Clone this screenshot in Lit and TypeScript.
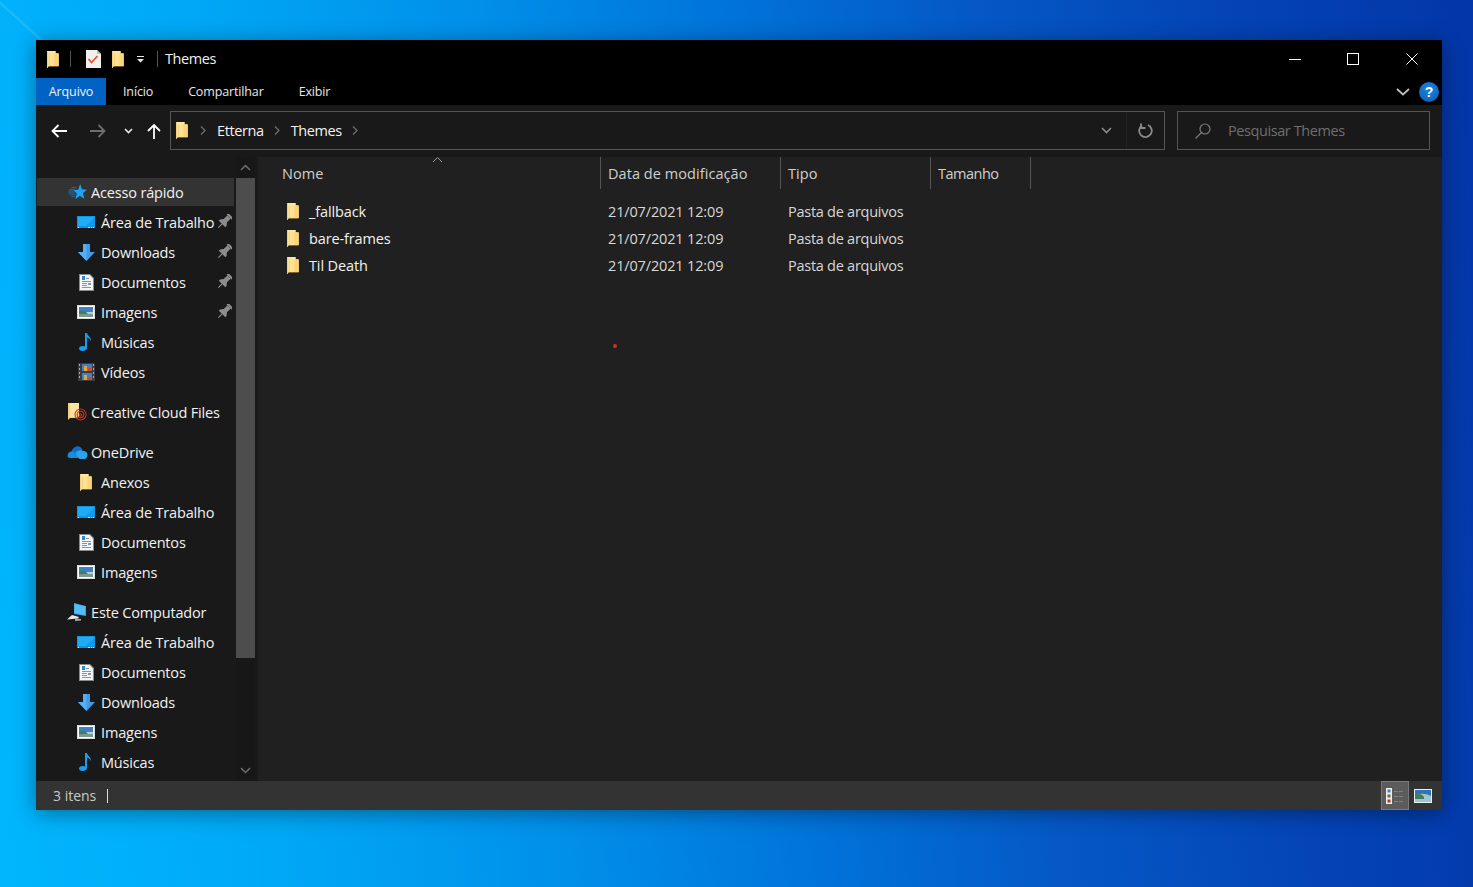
import { LitElement, html, css } from "lit";
import { customElement } from "lit/decorators.js";

const folder = (w = 12, h = 17) => html`<svg width=${w} height=${h} viewBox="0 0 13 17" preserveAspectRatio="none">
  <path d="M0 0h9.500v2.500h3V15H2.500L0 17z" fill="#fbe6a6"/>
  <path d="M2.500 2.500h10V15h-10z" fill="#ffe18f"/>
  <path d="M8 2.500h4.500V15H8z" fill="#fdd476"/>
  <path d="M0 0h1v16.500L0 17z" fill="#f2cf7e"/>
  <path d="M1.500 15.500h11V15h-10z" fill="#dda94a"/>
  <path d="M2.500 2.500V15H2V2z" fill="#e6bd62"/>
</svg>`;

const desktop = () => html`<svg width="18" height="14" viewBox="0 0 18 14">
  <rect x="0" y="1" width="18" height="12" fill="#0d96e6"/>
  <path d="M1 2h16v9H1z" fill="#22aaf5"/>
  <path d="M9 11L17 3v8z" fill="#0e9cf0"/>
  <path d="M1 12h1v1H1zM11 12h2v1h-2zM14 12h1v1h-1zM16 12h1v1h-1z" fill="#bfe6ff"/>
</svg>`;

const download = () => html`<svg width="17" height="17" viewBox="0 0 17 17">
  <path d="M5 0h7v8h5l-8.500 9L0 8h5z" fill="#3e9be6"/>
  <path d="M5 0h3.500v17L0 8h5z" fill="#57aef0"/>
</svg>`;

const doc = () => html`<svg width="15" height="17" viewBox="0 0 15 17">
  <path d="M0 0h11l4 4v13H0z" fill="#8a8a8a"/>
  <path d="M1 1h9.500L14 4.500V16H1z" fill="#f4f4f4"/>
  <path d="M3 2h3v4H3z" fill="#2f8ad8"/>
  <path d="M7 4h3v1H7zM3 7h9v1H3zM3 9h5v1H3zM9 9h3v2H9zM3 11h5v1H3zM3 13h9v1H3z" fill="#7f97ad"/>
</svg>`;

const picture = () => html`<svg width="18" height="14" viewBox="0 0 18 14">
  <rect width="18" height="14" fill="#d8d8d8"/>
  <rect x="1" y="1" width="16" height="12" fill="#fff"/>
  <rect x="2" y="2" width="14" height="5" fill="#3f82c4"/>
  <path d="M2 7h14v2H2z" fill="#a9cfe0"/>
  <path d="M2 6c4-1 7 0 9 3H2z" fill="#3f7f5d"/>
  <path d="M2 9h14v3H2z" fill="#7a9a90"/>
</svg>`;

const music = () => html`<svg width="14" height="18" viewBox="0 0 14 18">
  <path d="M6 0h2c.3 3 4.500 4 4 8-1-2.500-2.500-3-4-3.500V15c0 2-2 3-4.500 3C1.500 18 0 17 0 15.500 0 13.800 2 13 3.800 13c.9 0 1.700.2 2.200.5z" fill="#1a9df0"/>
</svg>`;

const video = () => html`<svg width="17" height="18" viewBox="0 0 17 18">
  <rect width="17" height="18" fill="#3c3c3c"/>
  <path d="M1 1h1v2H1zM1 5h1v2H1zM1 9h1v2H1zM1 13h1v2H1zM15 1h1v2h-1zM15 5h1v2h-1zM15 9h1v2h-1zM15 13h1v2h-1z" fill="#aaa"/>
  <rect x="4" y="1" width="10" height="7" fill="#3f7fd0"/>
  <rect x="4" y="10" width="10" height="7" fill="#3f7fd0"/>
  <path d="M6 3h3v5H6zM6 12h3v5H6z" fill="#e2a72c"/>
  <path d="M10 5h3v3h-3zM10 14h3v3h-3z" fill="#c8472f"/>
</svg>`;

const pin = () => html`<svg width="15" height="15" viewBox="0 0 13 13">
  <g transform="rotate(45 6.500 6.500)" fill="#8c8c8c">
    <rect x="3.500" y="-1" width="6" height="2"/>
    <path d="M4.500 1h4v4.500L10.500 8v1.500h-8V8l2-2.500z"/>
    <rect x="6" y="9.500" width="1" height="4.500"/>
  </g>
</svg>`;

const star = () => html`<svg width="19" height="17" viewBox="0 0 18 16">
  <path d="M11.500 0l1.700 5 4.800.3-3.800 3.200 1.300 5.500-4.500-3L7 14.500l1.300-5.600L5 5.700l4.700-.4z" fill="#1ca3f5"/>
  <path d="M1 5.500h5M0 7.500h6M1 9.500h6M3 11.500h4M3 3.500h5" stroke="#1c9cf0" stroke-width="1" opacity=".6"/>
</svg>`;

const cloudFiles = () => html`<svg width="19" height="18" viewBox="0 0 19 18">
  <path d="M0 0h9.500v15H2l-2 2z" fill="#f6d27f"/>
  <path d="M2 0h9v14H2z" fill="#ffe39f"/>
  <g fill="none" stroke="#e0281c" stroke-width="1.100">
    <circle cx="12.500" cy="11.500" r="5.500"/><circle cx="12.500" cy="11.500" r="3.300"/><circle cx="12.500" cy="12" r="1.200"/>
  </g>
</svg>`;

const onedrive = () => html`<svg width="21" height="13" viewBox="0 0 20 13">
  <path d="M4 5.500C5 2 8-.5 11 .3c2 .5 3.500 2 4 4l-7 5z" fill="#0f6cc4"/>
  <path d="M0 10c0-3 2-4.500 4-4.500 1 0 2 .2 3 1l6 5.500H3c-2 0-3-.8-3-2z" fill="#1a8be0"/>
  <path d="M8 7c1.500-2 4-3 6-2.500 1 .1 1.500.3 2 .6 2 .1 4 1.500 4 3.900 0 2-1.500 4-3 4H12z" fill="#2ba4ee"/>
</svg>`;

const computer = () => html`<svg width="20" height="18" viewBox="0 0 20 18">
  <path d="M7 0l12 3v10L7 11z" fill="#3ba4e8"/>
  <path d="M7.500 1L18 3.500V12L7.500 10z" fill="#54bdf5"/>
  <path d="M5 12l7 2-1 1.500L0 16.500z" fill="#e8e8e8"/>
  <path d="M8 15.500l6 .5v1.500l-6 .5z" fill="#aaa"/>
</svg>`;

type Row = { icon: unknown; label: string; level: number; pinned?: boolean; active?: boolean; gap?: boolean };

const rows: Row[] = [
  { icon: star(), label: "Acesso rápido", level: 0, active: true },
  { icon: desktop(), label: "Área de Trabalho", level: 1, pinned: true },
  { icon: download(), label: "Downloads", level: 1, pinned: true },
  { icon: doc(), label: "Documentos", level: 1, pinned: true },
  { icon: picture(), label: "Imagens", level: 1, pinned: true },
  { icon: music(), label: "Músicas", level: 1 },
  { icon: video(), label: "Vídeos", level: 1 },
  { icon: cloudFiles(), label: "Creative Cloud Files", level: 0, gap: true },
  { icon: onedrive(), label: "OneDrive", level: 0, gap: true },
  { icon: folder(), label: "Anexos", level: 1 },
  { icon: desktop(), label: "Área de Trabalho", level: 1 },
  { icon: doc(), label: "Documentos", level: 1 },
  { icon: picture(), label: "Imagens", level: 1 },
  { icon: computer(), label: "Este Computador", level: 0, gap: true },
  { icon: desktop(), label: "Área de Trabalho", level: 1 },
  { icon: doc(), label: "Documentos", level: 1 },
  { icon: download(), label: "Downloads", level: 1 },
  { icon: picture(), label: "Imagens", level: 1 },
  { icon: music(), label: "Músicas", level: 1 },
];

const files = ["_fallback", "bare-frames", "Til Death"];

@customElement("app-root")
export class AppRoot extends LitElement {
  static styles = css`
    :host {
      display: block;
      width: 1473px;
      height: 887px;
      overflow: hidden;
      box-sizing: border-box;
      padding: 40px 31px 0 36px;
      font-family: "Open Sans", "Noto Sans", sans-serif;
      font-size: 14px;
      color: #f2f2f2;
      background:
        linear-gradient(42deg, transparent 49%, rgba(255,255,255,.14) 50%, transparent 53%) 0 0 / 70px 70px no-repeat,
        linear-gradient(84deg, #00b6fd 0%, #00a8f6 18%, #0090ea 36%, #0074da 52%, #0558c6 68%, #0444b6 84%, #0336a8 100%);
    }
    .window {
      width: 1406px;
      height: 770px;
      display: flex;
      flex-direction: column;
      background: #000;
      box-shadow: 0 3px 20px rgba(0,0,0,.4);
    }
    .title {
      height: 38px;
      display: flex;
      align-items: center;
      padding-left: 11px;
      flex: none;
    }
    .sep { width: 1px; height: 16px; background: #555; }
    .sep.a { margin: 0 15px 0 11px; }
    .sep.b { margin: 0 7px 0 13px; }
    .qa { display: flex; align-items: center; }
    .qa svg { display: block; }
    .qa .f2 { margin-left: 11px; }
    .qa .dd { margin-left: 13px; }
    .ttl { font-size: 14.5px; letter-spacing: -.4px; color: #f0f0f0; flex: 1; padding-bottom: 2px; }
    .win { display: flex; align-items: center; height: 38px; padding-right: 1px; }
    .win div { width: 58.5px; display: flex; justify-content: center; }
    .win svg { display: block; }

    .tabs { height: 27px; display: flex; align-items: stretch; flex: none; font-size: 12.5px; letter-spacing: -.14px; }
    .tab { display: flex; align-items: center; color: #e8e8e8; }
    .tab.arq { width: 70px; background: #0063c4; justify-content: center; color: #f0f0f0; }
    .tab.t1 { margin-left: 17px; }
    .tab.t2 { margin-left: 35px; }
    .tab.t3 { margin-left: 35px; }
    .tabend { margin-left: auto; display: flex; align-items: center; gap: 9px; padding-right: 3px; }
    .help {
      width: 20px; height: 20px; border-radius: 50%;
      background: radial-gradient(circle at 50% 35%, #1f83e0, #0b5cb0);
      color: #fff; font: bold 14px "Liberation Sans", sans-serif;
      display: flex; align-items: center; justify-content: center;
    }

    .nav {
      height: 52px; flex: none; background: #191919; box-sizing: border-box;
      display: flex; align-items: center; padding: 0 0 1px 15px;
    }
    .nav svg { display: block; flex: none; }
    .nav .fw { margin-left: 23px; }
    .nav .rec { margin-left: 18px; }
    .nav .up { margin-left: 14px; }
    .addr {
      margin-left: 9px;
      width: 995px; height: 39px; box-sizing: border-box;
      border: 1px solid #555;
      display: flex; align-items: center; padding-left: 5px;
      color: #f2f2f2;
    }
    .crumb { font-size: 14.5px; letter-spacing: -.4px; }
    .addr .chev { margin: 0 11px 0 10px; }
    .addr .chev.first { margin: 0 11px 0 12px; }
    .addr-end { margin-left: auto; display: flex; align-items: center; height: 100%; }
    .addr-end .dd { width: 39px; display: flex; justify-content: center; }
    .addr-end .rf { width: 38px; display: flex; justify-content: center; border-left: 1px solid #222; height: 100%; align-items: center; box-sizing: border-box; }
    .search {
      margin-left: 12px;
      width: 253px; height: 39px; box-sizing: border-box;
      border: 1px solid #555;
      display: flex; align-items: center;
      padding-left: 17px;
      color: #6f6f6f;
      gap: 17px;
      font-size: 14.5px;
      letter-spacing: -.42px;
    }

    .body { flex: 1; display: flex; min-height: 0; }
    .side {
      width: 222px; flex: none; display: flex; background: #191919;
      overflow: hidden;
    }
    .tree { width: 200px; flex: none; padding-top: 20px; box-sizing: border-box; }
    .row {
      height: 30px; display: flex; align-items: center; position: relative;
      white-space: nowrap;
    }
    .row.gap { margin-top: 10px; }
    .row.active::before {
      content: ""; position: absolute; left: 1px; right: 2px; top: 1px; bottom: 1px; background: #333;
    }
    .row > * { position: relative; }
    .ic { width: 24px; height: 20px; display: flex; align-items: center; justify-content: center; flex: none; }
    .ic svg { display: block; }
    .row.l0 .ic { margin-left: 29px; margin-right: 2px; }
    .row.l1 .ic { margin-left: 38px; margin-right: 3px; }
    .lbl { font-size: 14.5px; letter-spacing: -.17px; }
    .row > .pin { position: absolute; left: 181px; top: 7px; }
    .pin svg { display: block; }
    .sb { width: 19px; flex: none; background: #171717; display: flex; flex-direction: column; align-items: center; }
    .sb .btn { height: 21px; display: flex; align-items: center; justify-content: center; flex: none; }
    .thumb { height: 480px; width: 19px; background: #4d4d4d; flex: none; }
    .sb .grow { flex: 1; }
    .main { flex: 1; background: #202020; min-width: 0; position: relative; }
    .hd { display: flex; height: 32px; color: #d0d0d0; font-size: 14.5px; letter-spacing: .06px; }
    .hd > div { border-right: 1px solid #555; box-sizing: border-box; padding-left: 7px; display: flex; align-items: center; }
    .c0 { width: 343px; }
    .c1 { width: 180px; }
    .c2 { width: 150px; }
    .c3 { width: 100px; }
    .hd .c0 { padding-left: 24px; }
    .hd .c3 { letter-spacing: -.5px; }
    .sort { position: absolute; left: 174px; top: 0; }
    .files { padding-top: 9px; }
    .item { display: flex; height: 27px; align-items: center; font-size: 14.5px; }
    .item > div { box-sizing: border-box; white-space: nowrap; }
    .item .c0 { display: flex; align-items: center; padding-left: 29px; gap: 10px; color: #f2f2f2; letter-spacing: -.13px; }
    .item .c0 svg { display: block; }
    .item .c1, .item .c2 { padding-left: 7px; color: #d8d8d8; }
    .item .c1 { letter-spacing: -.15px; }
    .item .c2 { letter-spacing: -.26px; }
    .dot { position: absolute; left: 355px; top: 187px; width: 4px; height: 4px; border-radius: 50%; background: #d92b20; }
    .status {
      height: 29px; flex: none; background: #333; display: flex; align-items: center;
      padding-left: 17px; color: #c8c8c8;
    }
    .bar { width: 1px; height: 14px; background: #ddd; margin-left: 11px; }
    .views { margin-left: auto; display: flex; align-items: center; padding-right: 5px; }
    .vw { width: 28px; height: 29px; box-sizing: border-box; background: #5c5c5c; border: 1px solid #7a7a7a; display: flex; align-items: center; justify-content: center; }
    .vw2 { width: 28px; display: flex; justify-content: center; }
    .views svg { display: block; }
  `;

  render() {
    const chev = (first = false) => html`<svg class="chev ${first ? "first" : ""}" width="6" height="9" viewBox="0 0 6 9"><path d="M1 .5l4 4-4 4" fill="none" stroke="#6e6e6e" stroke-width="1.300"/></svg>`;
    return html`
      <div class="window">
        <div class="title">
          <div class="qa">${folder()}</div>
          <div class="sep a"></div>
          <div class="qa">
            <svg width="15" height="18" viewBox="0 0 15 18">
              <path d="M0 0h11l4 4v14H0z" fill="#f0f0f0"/>
              <path d="M11 0l4 4h-4z" fill="#bbb"/>
              <path d="M2.500 9l3 3.500L11.500 6" fill="none" stroke="#e8562a" stroke-width="1.800"/>
            </svg>
            <span class="f2">${folder()}</span>
            <svg class="dd" width="7" height="7" viewBox="0 0 7 7"><path d="M0 0h7v1H0zM0 3h7L3.500 6.500z" fill="#e8e8e8"/></svg>
          </div>
          <div class="sep b"></div>
          <div class="ttl">Themes</div>
          <div class="win">
            <div><svg width="12" height="1"><rect width="12" height="1" fill="#fff"/></svg></div>
            <div><svg width="12" height="12"><rect x=".5" y=".5" width="11" height="11" fill="none" stroke="#fff"/></svg></div>
            <div><svg width="12" height="12"><path d="M.5.500l11 11M11.500.500l-11 11" stroke="#fff"/></svg></div>
          </div>
        </div>
        <div class="tabs">
          <div class="tab arq">Arquivo</div>
          <div class="tab t1">Início</div>
          <div class="tab t2">Compartilhar</div>
          <div class="tab t3">Exibir</div>
          <div class="tabend">
            <svg width="14" height="8" viewBox="0 0 14 8"><path d="M1 1l6 5.500L13 1" fill="none" stroke="#bdbdbd" stroke-width="1.800"/></svg>
            <div class="help">?</div>
          </div>
        </div>
        <div class="nav">
          <svg width="16" height="14" viewBox="0 0 16 14"><path d="M16 7H2M7.500 1L1.500 7l6 6" fill="none" stroke="#fff" stroke-width="1.800"/></svg>
          <svg class="fw" width="16" height="14" viewBox="0 0 16 14"><path d="M0 7h14M8.500 1l6 6-6 6" fill="none" stroke="#6e6e6e" stroke-width="1.800"/></svg>
          <svg class="rec" width="9" height="6" viewBox="0 0 9 6"><path d="M1 1l3.500 3.500L8 1" fill="none" stroke="#e8e8e8" stroke-width="1.600"/></svg>
          <svg class="up" width="14" height="16" viewBox="0 0 14 16"><path d="M7 16V2M1 8l6-6 6 6" fill="none" stroke="#fff" stroke-width="1.800"/></svg>
          <div class="addr">
            ${folder()}
            ${chev(true)}
            <span class="crumb">Etterna</span>
            ${chev()}
            <span class="crumb">Themes</span>
            ${chev()}
            <div class="addr-end">
              <div class="dd"><svg width="11" height="7" viewBox="0 0 11 7"><path d="M1 1l4.500 4.500L10 1" fill="none" stroke="#8a8a8a" stroke-width="1.600"/></svg></div>
              <div class="rf"><svg width="16" height="16" viewBox="0 0 16 16"><path d="M10 2a6.300 6.300 0 1 1-6 .5" fill="none" stroke="#8a8a8a" stroke-width="1.800"/><path d="M3 .5v4.500h4.500" fill="none" stroke="#8a8a8a" stroke-width="1.800"/></svg></div>
            </div>
          </div>
          <div class="search">
            <svg width="16" height="16" viewBox="0 0 16 16"><circle cx="10" cy="6" r="5" fill="none" stroke="#7a7a7a" stroke-width="1.200"/><path d="M6.500 9.500L.5 15.500" stroke="#7a7a7a" stroke-width="1.300"/></svg>
            <span>Pesquisar Themes</span>
          </div>
        </div>
        <div class="body">
          <div class="side">
            <div class="tree">
              ${rows.map(
                (r) => html`<div class="row l${r.level} ${r.gap ? "gap" : ""} ${r.active ? "active" : ""}">
                  <span class="ic">${r.icon}</span><span class="lbl">${r.label}</span>
                  ${r.pinned ? html`<span class="pin">${pin()}</span>` : ""}
                </div>`
              )}
            </div>
            <div class="sb">
              <div class="btn"><svg width="11" height="7" viewBox="0 0 11 7"><path d="M1 6l4.500-4.500L10 6" fill="none" stroke="#6e6e6e" stroke-width="1.500"/></svg></div>
              <div class="thumb"></div>
              <div class="grow"></div>
              <div class="btn"><svg width="11" height="7" viewBox="0 0 11 7"><path d="M1 1l4.500 4.500L10 1" fill="none" stroke="#6e6e6e" stroke-width="1.500"/></svg></div>
            </div>
          </div>
          <div class="main">
            <svg class="sort" width="11" height="6" viewBox="0 0 11 6"><path d="M1 5l4.500-4.500L10 5" fill="none" stroke="#9a9a9a"/></svg>
            <div class="hd">
              <div class="c0">Nome</div>
              <div class="c1">Data de modificação</div>
              <div class="c2">Tipo</div>
              <div class="c3">Tamanho</div>
            </div>
            <div class="files">
              ${files.map(
                (f) => html`<div class="item">
                  <div class="c0">${folder()}<span>${f}</span></div>
                  <div class="c1">21/07/2021 12:09</div>
                  <div class="c2">Pasta de arquivos</div>
                </div>`
              )}
            </div>
            <div class="dot"></div>
          </div>
        </div>
        <div class="status">
          <span>3 itens</span><div class="bar"></div>
          <div class="views">
            <div class="vw">
              <svg width="18" height="16" viewBox="0 0 18 16">
                <rect width="6" height="16" fill="#eee"/>
                <rect x="1.500" y="1.500" width="3" height="3" fill="#3f82c4"/>
                <rect x="1.500" y="6.500" width="3" height="3" fill="#7a6a2a"/>
                <rect x="1.500" y="11.500" width="3" height="3" fill="#b03a20"/>
                <path d="M8 3h4v1H8zM13 3h4v1h-4zM8 8h4v1H8zM13 8h4v1h-4zM8 13h4v1H8zM13 13h4v1h-4z" fill="#808080"/>
              </svg>
            </div>
            <div class="vw2">
              <svg width="18" height="14" viewBox="0 0 18 14">
                <rect width="18" height="14" fill="#eee"/>
                <rect x="1" y="1" width="16" height="12" fill="#2f74b8"/>
                <path d="M1 7c5-3 10-3 16 0v6H1z" fill="#9fc6cf"/>
                <path d="M1 6c4-2 7-1 9 2v2H1z" fill="#3f7f5d"/>
              </svg>
            </div>
          </div>
        </div>
      </div>
    `;
  }
}
